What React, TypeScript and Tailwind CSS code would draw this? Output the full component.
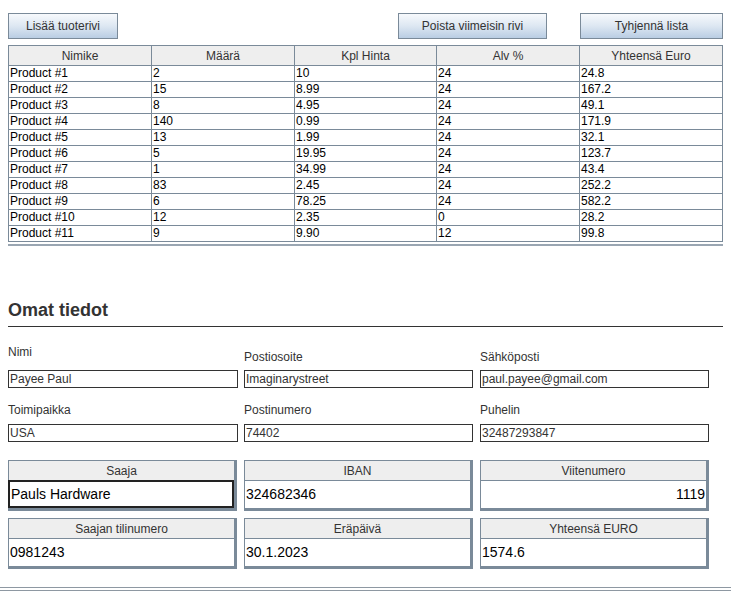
import React from "react";

const rows: string[][] = [
  ["Product #1", "2", "10", "24", "24.8"],
  ["Product #2", "15", "8.99", "24", "167.2"],
  ["Product #3", "8", "4.95", "24", "49.1"],
  ["Product #4", "140", "0.99", "24", "171.9"],
  ["Product #5", "13", "1.99", "24", "32.1"],
  ["Product #6", "5", "19.95", "24", "123.7"],
  ["Product #7", "1", "34.99", "24", "43.4"],
  ["Product #8", "83", "2.45", "24", "252.2"],
  ["Product #9", "6", "78.25", "24", "582.2"],
  ["Product #10", "12", "2.35", "0", "28.2"],
  ["Product #11", "9", "9.90", "12", "99.8"],
];

const headers = ["Nimike", "Määrä", "Kpl Hinta", "Alv %", "Yhteensä Euro"];

function Btn({ label, w }: { label: string; w: string }) {
  return (
    <button
      className={`${w} h-[26px] border border-[#7a8a99] bg-gradient-to-b from-[#f7f9fc] via-[#dde7f2] to-[#b9cde3] text-[12px] text-[#333333]`}
    >
      {label}
    </button>
  );
}

function Field({ value, w }: { value: string; w: string }) {
  return (
    <div
      className={`${w} h-[18px] border border-[#333333] bg-white px-[1px] text-[12px] leading-[16px] text-[#333333]`}
    >
      {value}
    </div>
  );
}

function Panel({
  title,
  value,
  right,
  focused,
}: {
  title: string;
  value: string;
  right?: boolean;
  focused?: boolean;
}) {
  return (
    <div className="flex h-[51px] w-[229px] flex-col border-l border-t border-r-[3px] border-b-[3px] border-[#7a8a99] bg-white">
      <div className="flex h-[20px] items-center justify-center border-b border-[#7a8a99] bg-[#eeeeee] text-[12px] text-[#333333]">
        {title}
      </div>
      <div
        className={`flex flex-1 items-center px-[1px] text-[14px] text-black ${
          right ? "justify-end" : "justify-start"
        } ${focused ? "border-2 border-[#222222] -ml-[1px] -mt-[1px]" : ""}`}
      >
        {value}
      </div>
    </div>
  );
}

export default function App() {
  const colW = ["w-[143px]", "w-[143px]", "w-[142px]", "w-[143px]", "w-[143px]"];
  return (
    <div
      className="relative h-[591px] w-[731px] overflow-hidden bg-white text-black"
      style={{ fontFamily: '"Liberation Sans", Arial, sans-serif' }}
    >
      <div className="flex pl-[8px] pr-[8px] pt-[13px]">
        <Btn label="Lisää tuoterivi" w="w-[110px]" />
        <div className="ml-auto">
          <Btn label="Poista viimeisin rivi" w="w-[149px]" />
        </div>
        <div className="ml-[33px]">
          <Btn label="Tyhjennä lista" w="w-[143px]" />
        </div>
      </div>

      <div className="ml-[8px] mt-[6px] w-[715px] border-b-2 border-[#9aa6b2] pb-[2px]">
        <table className="w-[714px] table-fixed border-collapse text-[12px]">
          <colgroup>
            {colW.map((w, i) => (
              <col key={i} className={w} />
            ))}
          </colgroup>
          <thead>
            <tr>
              {headers.map((h) => (
                <th
                  key={h}
                  className="h-[20px] border border-[#7a8a99] bg-[#eeeeee] p-0 text-center font-normal text-[#333333]"
                >
                  {h}
                </th>
              ))}
            </tr>
          </thead>
          <tbody>
            {rows.map((r, i) => (
              <tr key={i}>
                {r.map((c, j) => (
                  <td
                    key={j}
                    className="h-[16px] overflow-hidden border border-[#7a8a99] py-0 pl-[1px] pr-0 leading-[15px] text-black"
                  >
                    {c}
                  </td>
                ))}
              </tr>
            ))}
          </tbody>
        </table>
      </div>

      <div className="ml-[8px] mt-[53px] w-[715px]">
        <div className="h-[24px] text-[18px] font-bold leading-[22px] text-[#333333]">
          Omat tiedot
        </div>
        <div className="mt-[3px] h-[1px] bg-[#333333]" />

        <div className="grid grid-cols-[236px_236px_236px] items-start">
          <div className="flex flex-col">
            <div className="mt-[18px] h-[15px] text-[12px] leading-[15px] text-[#333333]">Nimi</div>
            <div className="mt-[10px]">
              <Field value="Payee Paul" w="w-[230px]" />
            </div>
          </div>
          <div className="flex flex-col">
            <div className="mt-[23px] h-[15px] text-[12px] leading-[15px] text-[#333333]">Postiosoite</div>
            <div className="mt-[5px]">
              <Field value="Imaginarystreet" w="w-[229px]" />
            </div>
          </div>
          <div className="flex flex-col">
            <div className="mt-[23px] h-[15px] text-[12px] leading-[15px] text-[#333333]">Sähköposti</div>
            <div className="mt-[5px]">
              <Field value="paul.payee@gmail.com" w="w-[229px]" />
            </div>
          </div>
        </div>

        <div className="grid grid-cols-[236px_236px_236px] items-start">
          <div className="flex flex-col">
            <div className="mt-[15px] h-[15px] text-[12px] leading-[15px] text-[#333333]">Toimipaikka</div>
            <div className="mt-[6px]">
              <Field value="USA" w="w-[230px]" />
            </div>
          </div>
          <div className="flex flex-col">
            <div className="mt-[15px] h-[15px] text-[12px] leading-[15px] text-[#333333]">Postinumero</div>
            <div className="mt-[6px]">
              <Field value="74402" w="w-[229px]" />
            </div>
          </div>
          <div className="flex flex-col">
            <div className="mt-[15px] h-[15px] text-[12px] leading-[15px] text-[#333333]">Puhelin</div>
            <div className="mt-[6px]">
              <Field value="32487293847" w="w-[229px]" />
            </div>
          </div>
        </div>

        <div className="mt-[18px] grid grid-cols-[236px_236px_236px] gap-y-[7px]">
          <Panel title="Saaja" value="Pauls Hardware" focused />
          <Panel title="IBAN" value="324682346" />
          <Panel title="Viitenumero" value="1119" right />
          <Panel title="Saajan tilinumero" value="0981243" />
          <Panel title="Eräpäivä" value="30.1.2023" />
          <Panel title="Yhteensä EURO" value="1574.6" />
        </div>
      </div>

      <div className="absolute bottom-0 left-0 right-0 h-[4px] border-t border-b border-[#8e98a2] bg-white" />
    </div>
  );
}
